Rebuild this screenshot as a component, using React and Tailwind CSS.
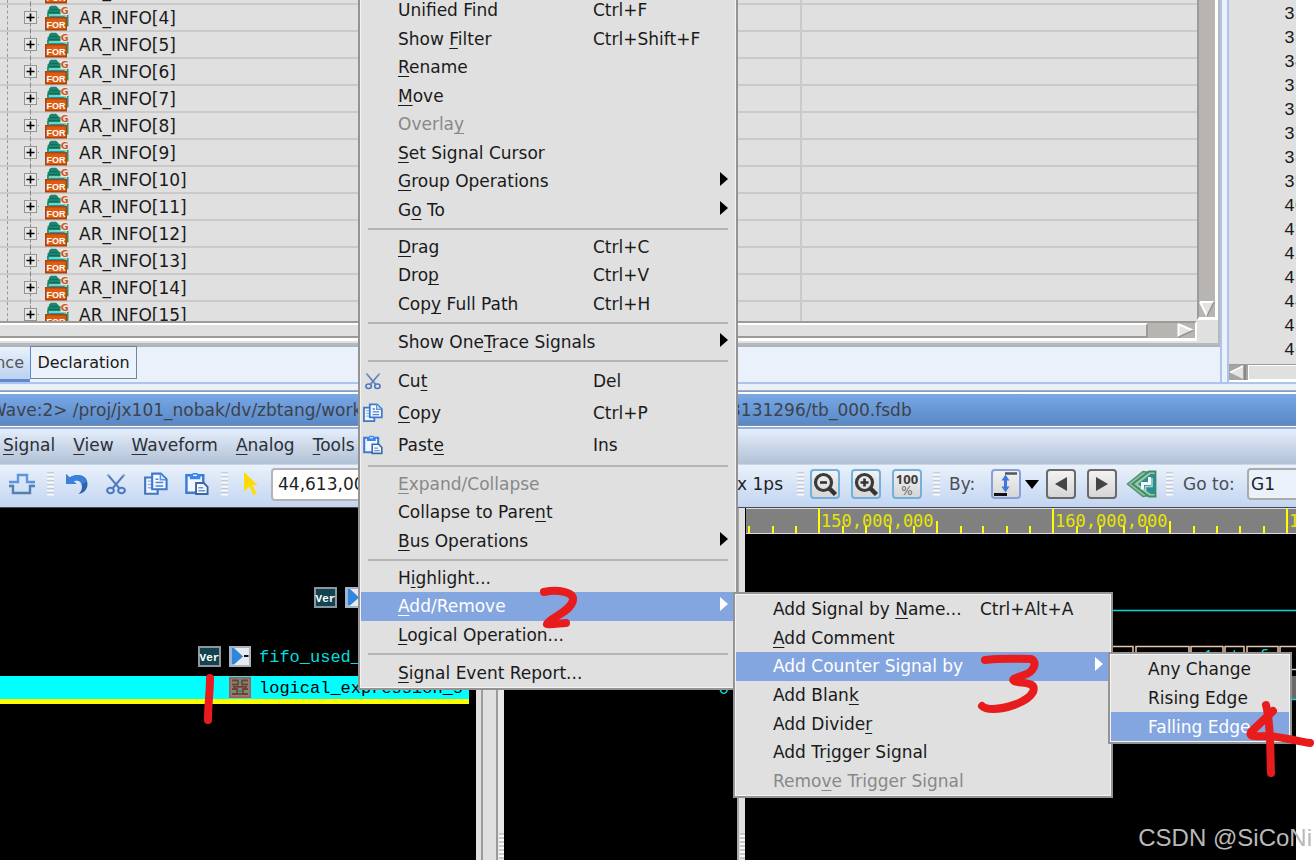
import React from "react";

const SANS = "font-['DejaVu_Sans',sans-serif] text-[17px] leading-5";
const MONO = "font-['Liberation_Mono',monospace] text-[17px] leading-5";

/* Text with a mnemonic: the character after "&" is underlined. */
function Mnemonic({ text }) {
  const i = text.indexOf("&");
  if (i < 0) return <span>{text}</span>;
  return (
    <span>
      {text.slice(0, i)}
      <u className="underline decoration-1 underline-offset-[3px] [text-decoration-skip-ink:none]">{text[i + 1]}</u>
      {text.slice(i + 2)}
    </span>
  );
}

function ForIcon() {
  return (
    <svg className="h-[26px] w-6 shrink-0" viewBox="0 0 24 26" aria-hidden="true">
      <path d="M2 8h19v14l-3 3H2z" fill="#2b9483" />
      <path d="M4 9h17v2.500H4z" fill="#6fd6c4" />
      <path d="M5 11h14v2H5z" fill="#1795b0" />
      <path d="M2.500 9V5.500L4 4V2.500L6 .8h5L13 2.500 14 4h3v5z" fill="#1a8571" />
      <path d="M5 4.500h8M3.500 7.500h11" stroke="#126a5b" strokeWidth="1" />
      <path d="M20.500 10.500l2.500-.5v10l-2.500 3z" fill="#8fe0d0" />
      <path d="M22.800 9.500v12" stroke="#1f8576" strokeWidth="1.300" />
      <path d="M15.500 1h8v9h-8z" fill="#ece4de" />
      <text x="15.700" y="9.300" fontSize="9.500" fontWeight="700" fontFamily="DejaVu Sans, sans-serif" fill="#c9581c">G</text>
      <path d="M.7 12.700h20.600v12H.7z" fill="#dd5c10" stroke="#a8450f" strokeWidth="1.400" />
      <text x="1.600" y="22.600" fontSize="9" fontWeight="700" fontFamily="Liberation Sans, sans-serif" fill="#fff">FOR</text>
    </svg>
  );
}

function ScissorsIcon({ className }) {
  return (
    <svg className={className} viewBox="0 0 20 22" fill="none" aria-hidden="true">
      <path d="M1.500 1.500L14 16M18.500 1.500L6 16" stroke="#8ba4cc" strokeWidth="2.400" />
      <path d="M3 3l10 12M17 3L7 15" stroke="#4a72b5" strokeWidth="1.200" />
      <ellipse cx="4.500" cy="17.500" rx="3.400" ry="2.800" stroke="#4c78bf" strokeWidth="2" />
      <ellipse cx="15.500" cy="17.500" rx="3.400" ry="2.800" stroke="#4c78bf" strokeWidth="2" />
    </svg>
  );
}

function CopyIcon({ className }) {
  return (
    <svg className={className} viewBox="0 0 25 24" fill="none" aria-hidden="true">
      <path d="M1.200 5.200h13v17h-13z" fill="#f2f7ff" stroke="#4276bd" strokeWidth="2.200" />
      <path d="M4 9h5M4 12.500h5M4 16h5" stroke="#8fb2e4" strokeWidth="1.500" />
      <path d="M8.500 1.200h9l6 5.800v10.500h-15z" fill="#f5f9ff" stroke="#3c79cf" strokeWidth="2.200" />
      <path d="M17 1.500v6h6" fill="#cfe0fa" stroke="#5b93df" strokeWidth="1.500" />
      <path d="M12 7h3M12 10.500h8M12 14h8" stroke="#4c83d0" strokeWidth="1.600" />
    </svg>
  );
}

function PasteIcon({ className }) {
  return (
    <svg className={className} viewBox="0 0 25 25" fill="none" aria-hidden="true">
      <path d="M1.500 3.500h17.500v18H1.500z" fill="#f2f7ff" stroke="#3c7cdb" strokeWidth="2.600" />
      <path d="M5 2.500h2.500L8 1h5l.5 1.500H16v5H5z" fill="#3c86ea" />
      <path d="M8.500 3.500h4" stroke="#e9f2ff" strokeWidth="1.500" />
      <path d="M11.500 11.500h8l4 4V23h-12z" fill="#f5f9ff" stroke="#3c68a6" strokeWidth="2" />
      <path d="M14 16.500h5M14 19.500h7" stroke="#6c93c8" strokeWidth="1.500" />
    </svg>
  );
}

function ToolButton({ label, children, className = "w-6" }) {
  return (
    <button type="button" aria-label={label} className={"flex h-8 shrink-0 items-center justify-center " + className}>
      {children}
    </button>
  );
}

function Grip() {
  return (
    <svg className="h-6 w-[7px] shrink-0" viewBox="0 0 7 24" aria-hidden="true">
      <path d="M0 1h7M0 5h7M0 9h7M0 13h7M0 17h7M0 21h7" stroke="#a9b0ba" strokeWidth="1" />
      <path d="M0 2.500h7M0 6.500h7M0 10.500h7M0 14.500h7M0 18.500h7M0 22.500h7" stroke="#f7f9fc" strokeWidth="2" />
    </svg>
  );
}

function SplitterGrip() {
  return (
    <svg className="h-[27px] w-[6px]" viewBox="0 0 6 27" aria-hidden="true">
      <path d="M1 1h5M1 5h5M1 9h5M1 13h5M1 17h5M1 21h5M1 25h5" stroke="#bdbdbd" strokeWidth="1.500" />
      <path d="M1 3h5M1 7h5M1 11h5M1 15h5M1 19h5M1 23h5" stroke="#fff" strokeWidth="1.500" />
    </svg>
  );
}

/* ---------- Upper panes ---------- */

function TreeRow({ n }) {
  return (
    <li role="treeitem" className="flex h-[27px] border-b-2 border-[#cacaca]">
      <div className="flex w-[802px] shrink-0 items-center border-r-2 border-[#cacaca]">
        <span className="ml-[7px] h-full border-l border-dashed border-[#9a9a9a]" />
        <span className="ml-[14px] flex h-[27px] w-4 shrink-0 flex-col items-center">
          <span className="h-[7px] border-l border-dashed border-[#888]" />
          <button
            type="button"
            aria-label={"Expand AR_INFO[" + n + "]"}
            className="size-[13px] shrink-0 border border-[#96948f] bg-[#e6e6e6]"
          >
            <svg viewBox="0 0 11 11" className="size-[11px]" aria-hidden="true">
              <path d="M5.500 1.500v8M1.500 5.500h8" stroke="#000" strokeWidth="1.600" />
            </svg>
          </button>
          <span className="h-[7px] border-l border-dashed border-[#888]" />
        </span>
        <span className="mr-[6px] size-px bg-[#888]" />
        <ForIcon />
        <span className={"ml-[10px] text-[#1a1a1a] " + SANS}>AR_INFO[{n}]</span>
      </div>
    </li>
  );
}

function SignalTree() {
  return (
    <ul role="tree" className="h-[321px] flex-1 overflow-hidden bg-[#e0e0e0]">
      <li className="h-[5px] overflow-hidden">
        <ul className="-mt-[22px]">
          <TreeRow n={3} />
        </ul>
      </li>
      {[4, 5, 6, 7, 8, 9, 10, 11, 12, 13, 14, 15].map((n) => (
        <TreeRow key={n} n={n} />
      ))}
    </ul>
  );
}

function TreePane() {
  return (
    <section className="flex min-w-0 flex-1 flex-col bg-[#e0e0e0]">
      <div className="flex flex-col border-r-2 border-[#b9b9b9]">
        <div className="flex">
          <SignalTree />
          <div className="flex h-[320px] w-[21px] flex-col items-stretch border-b-[3px] border-l-2 border-r-[3px] border-b-white border-l-[#9d9b97] border-r-white bg-[#b8b4b1]">
            <button type="button" aria-label="Scroll down" className="mt-auto h-4">
              <svg viewBox="0 0 16 16" className="size-4" aria-hidden="true">
                <path d="M1 1h14L8 15z" fill="#e4e3e1" />
                <path d="M1 1h14M1 1l7 14" stroke="#fff" strokeWidth="2" />
                <path d="M15 1L8 15" stroke="#97948f" strokeWidth="1.500" />
              </svg>
            </button>
          </div>
        </div>
        <div className="mr-[21px] flex h-5 border-b-[3px] border-r-2 border-t-2 border-b-white border-r-white border-t-[#9d9b97] bg-[#b8b4b1]">
          <div className="flex-1 border-b-2 border-r-2 border-t-2 border-b-[#9d9b97] border-r-[#9d9b97] border-t-white bg-[#e0e0e0]" />
          <div className="w-[29px]" />
          <button type="button" aria-label="Scroll right" className="w-[18px]">
            <svg viewBox="0 0 18 15" className="h-[15px] w-[18px]" aria-hidden="true">
              <path d="M1 0.500v14L16 7.500z" fill="#e4e3e1" />
              <path d="M1.500 1v13M1 1l15 6.500" stroke="#fff" strokeWidth="2" />
              <path d="M1 14.500l15-7" stroke="#97948f" strokeWidth="1.500" />
            </svg>
          </button>
        </div>
        <div className="h-1 border-b-2 border-[#b9b9b9]" />
      </div>
      <div className={"flex h-[37px] items-start border-t-2 border-[#a9b5c0] bg-[#eaf1fa] " + SANS}>
        <button
          type="button"
          className="flex h-[35px] w-[30px] items-center justify-end border-b-[3px] border-[#5b8bcb] bg-linear-to-b from-[#e9f1fb] to-[#bcd2f1] pr-[6px] text-[#555]"
        >
          <span className="text-[16px]">Instance</span>
        </button>
        <button
          type="button"
          className="-mt-px flex h-[33px] w-[107px] items-center justify-center border border-[#74829a] border-l-[#5b8bcb] bg-[#ecf2f9] text-[16px] text-[#1a1a1a]"
        >
          Declaration
        </button>
      </div>
    </section>
  );
}

function SourcePane() {
  return (
    <section className="flex w-[67px] flex-col overflow-hidden bg-[#e0e0e0]">
      <ol className="flex-1 overflow-hidden pl-[55px] pt-[2px] font-['Liberation_Mono',monospace] text-[18px] leading-5 text-[#1a1a1a]">
        {[32, 33, 34, 35, 36, 37, 38, 39, 40, 41, 42, 43, 44, 45, 46].map((n) => (
          <li key={n} className="flex h-6 items-center">{n}</li>
        ))}
      </ol>
      <div className="flex h-[18px] border-b-2 border-t border-b-white border-t-[#9d9b97] bg-[#a5a5a5]">
        <button type="button" aria-label="Scroll left" className="w-[17px] shrink-0 border-r-2 border-[#888]">
          <svg viewBox="0 0 15 15" className="size-[15px]" aria-hidden="true">
            <path d="M14 1v13L1 7.500z" fill="#e4e3e1" />
            <path d="M14 1L1 7.500" stroke="#fff" strokeWidth="1.500" />
          </svg>
        </button>
        <div className="ml-[2px] flex-1 border border-r-0 border-white bg-[#e0e0e0]" />
      </div>
    </section>
  );
}

/* ---------- Title, menu bar, tool bar ---------- */

function TitleBar() {
  return (
    <header
      className={
        "flex h-[31px] items-center overflow-hidden whitespace-nowrap bg-linear-to-b from-[#7aa8e6] to-[#5888c6] text-[#3c434c] " + SANS
      }
    >
      <h1 className="-ml-[10px] flex">
        <span className="w-[740px] shrink-0">Wave:2&gt; /proj/jx101_nobak/dv/zbtang/work</span>
        <span>3131296/tb_000.fsdb</span>
      </h1>
    </header>
  );
}

function MenuBar() {
  return (
    <nav
      className={
        "flex h-9 items-center gap-[18px] border-b border-[#c9d6ea] bg-linear-to-b from-[#e5eefb] to-[#b2c1d6] pb-1 pl-[3px] text-[#2b2f36] " + SANS
      }
    >
      {["&Signal", "&View", "&Waveform", "&Analog", "&Tools"].map((t) => (
        <button key={t} type="button">
          <Mnemonic text={t} />
        </button>
      ))}
    </nav>
  );
}

const FRAMED = "w-[30px] h-[30px] rounded border-2 bg-linear-to-b from-[#f2f2f2] to-[#d6d6d6]";

function ToolBar() {
  return (
    <div
      className={
        "flex h-[42px] items-center overflow-hidden bg-linear-to-b from-[#e9f1fa] to-[#c3d5f2] pb-1 text-[#1f1f1f] " + SANS
      }
    >
      <div className="flex w-[783px] shrink-0 items-center">
        <ToolButton label="Signal list" className="ml-2 w-7">
          <svg viewBox="0 0 28 22" className="h-[22px] w-7" fill="none" aria-hidden="true">
            <path d="M1 9h9V2h9v7h8" stroke="#5e94e0" strokeWidth="2.400" />
            <path d="M1 13h4v7h17v-7h5" stroke="#557fae" strokeWidth="2.400" />
            <path d="M2 11h3M22 11h4" stroke="#a7c0e4" strokeWidth="1.500" />
          </svg>
        </ToolButton>
        <span className="ml-[11px] flex"><Grip /></span>
        <ToolButton label="Undo" className="ml-[11px] w-6">
          <svg viewBox="0 0 24 24" className="size-6" fill="none" aria-hidden="true">
            <path d="M1 2v10h10.500L8.500 9C13 7 17 10 17 15c0 3-1.500 5-3.500 7 6-1 9-5 9-10C22.500 3 12 .5 4.500 5.500z" fill="#2c63ad" />
            <path d="M1 2v10h10.500L8.500 9C12 7.500 16 9 17 12l5-2C19 2.500 11 1 4.500 5.500z" fill="#3b80da" />
          </svg>
        </ToolButton>
        <ToolButton label="Cut" className="ml-[17px] w-5"><ScissorsIcon className="h-[22px] w-5" /></ToolButton>
        <ToolButton label="Copy" className="ml-[18px] w-6"><CopyIcon className="h-6 w-6" /></ToolButton>
        <ToolButton label="Paste" className="ml-[17px] w-6"><PasteIcon className="h-6 w-6" /></ToolButton>
        <span className="ml-3 flex"><Grip /></span>
        <ToolButton label="Select" className="ml-[15px] w-4">
          <svg viewBox="0 0 16 26" className="h-[26px] w-4" aria-hidden="true">
            <path d="M1 1l13.500 13h-5l4 8.500-3 2L6.500 15.500 1 20.500z" fill="#ffdc00" />
          </svg>
        </ToolButton>
        <input
          type="text"
          aria-label="Cursor time"
          defaultValue="44,613,000"
          className="ml-3 h-[33px] min-w-0 flex-1 rounded border-2 border-[#b4b4b4] bg-white px-[5px]"
        />
        <span className="ml-8">x 1ps</span>
      </div>
      <span className="ml-[14px] flex"><Grip /></span>
      <ToolButton label="Zoom out" className={"ml-[6px] border-[#73b0dd] " + FRAMED}>
        <svg viewBox="0 0 26 26" className="size-[26px]" fill="none" aria-hidden="true">
          <circle cx="11.500" cy="11.500" r="8" stroke="#3a3a3a" strokeWidth="3.200" />
          <path d="M8 11.500h7" stroke="#333" strokeWidth="2.600" />
          <path d="M17.500 17.500l6 6" stroke="#333" strokeWidth="4.500" />
        </svg>
      </ToolButton>
      <ToolButton label="Zoom in" className={"ml-[11px] border-[#73b0dd] " + FRAMED}>
        <svg viewBox="0 0 26 26" className="size-[26px]" fill="none" aria-hidden="true">
          <circle cx="11.500" cy="11.500" r="8" stroke="#3a3a3a" strokeWidth="3.200" />
          <path d="M7.500 11.500h8M11.500 7.500v8" stroke="#333" strokeWidth="2.600" />
          <path d="M17.500 17.500l6 6" stroke="#333" strokeWidth="4.500" />
        </svg>
      </ToolButton>
      <ToolButton label="Zoom 100%" className={"ml-[11px] border-[#73b0dd] " + FRAMED}>
        <svg viewBox="0 0 26 26" className="size-[26px]" aria-hidden="true">
          <text x="13" y="12.500" textAnchor="middle" fontSize="13" fontWeight="700" fontFamily="Open Sans, sans-serif" fill="#3d3d3d">100</text>
          <text x="13" y="24" textAnchor="middle" fontSize="12" fontFamily="DejaVu Sans, sans-serif" fill="#666">%</text>
        </svg>
      </ToolButton>
      <span className="ml-[11px] flex"><Grip /></span>
      <span className="ml-[9px] w-[42px] shrink-0 text-[#4a4f57]">By:</span>
      <ToolButton label="Search by edge" className={"border-[#86a0dc] " + FRAMED}>
        <svg viewBox="0 0 26 26" className="size-[26px]" fill="none" aria-hidden="true">
          <path d="M12 2.500h12" stroke="#555" strokeWidth="2.500" />
          <path d="M1 23.500h13" stroke="#111" strokeWidth="3" />
          <path d="M12.500 8v9" stroke="#3c78e0" strokeWidth="3" />
          <path d="M8.500 9.500l4-6 4 6zM8.500 15.500l4 6 4-6z" fill="#3c78e0" />
        </svg>
      </ToolButton>
      <ToolButton label="Search by options" className="ml-[4px] w-[14px]">
        <svg viewBox="0 0 14 9" className="h-[9px] w-[14px]" aria-hidden="true">
          <path d="M0 0h14L7 9z" fill="#000" />
        </svg>
      </ToolButton>
      <ToolButton label="Previous" className={"ml-[7px] border-[#6a6a6a] " + FRAMED}>
        <svg viewBox="0 0 12 14" className="h-[14px] w-3" aria-hidden="true"><path d="M0 7L12 0v14z" fill="#444" /></svg>
      </ToolButton>
      <ToolButton label="Next" className={"ml-[11px] border-[#6a6a6a] " + FRAMED}>
        <svg viewBox="0 0 12 14" className="h-[14px] w-3" aria-hidden="true"><path d="M12 7L0 0v14z" fill="#444" /></svg>
      </ToolButton>
      <ToolButton label="Trace" className="ml-[9px] w-[31px]">
        <svg viewBox="0 0 31 28" className="h-7 w-[31px]" fill="none" aria-hidden="true">
          <path d="M17 1.500L1.500 14 17 26.500l6-1V2.500z" fill="#93bfa0" stroke="#4d9070" strokeWidth="1.500" />
          <path d="M23 1.500L6.500 14 23 26.500h6.500v-25z" fill="#9cc6a8" stroke="#3f8a66" strokeWidth="1.800" />
          <path d="M24.500 4L12 14l12.500 10H29V4z" fill="#2b8f92" />
          <path d="M16.500 19.500v-6h7V7" stroke="#f4fbf8" strokeWidth="3" />
          <path d="M19.500 21v-4.500h6.500V8" stroke="#a8dad6" strokeWidth="1.500" />
        </svg>
      </ToolButton>
      <span className="ml-[9px] flex"><Grip /></span>
      <label htmlFor="goto" className="ml-[10px] w-[64px] shrink-0 text-[#4a4f57]">Go to:</label>
      <select
        id="goto"
        defaultValue="G1"
        className="h-8 w-[120px] shrink-0 appearance-none rounded border-2 border-[#ababab] bg-[#eaf1fa] pl-[2px]"
      >
        <option>G1</option>
      </select>
    </div>
  );
}

/* ---------- Waveform area ---------- */

function VerIcon() {
  return (
    <svg viewBox="0 0 23 21" className="h-[21px] w-[23px] shrink-0" aria-hidden="true">
      <path d="M1 1h21v19H1z" fill="#114450" stroke="#8d979b" strokeWidth="2" />
      <text x="11.500" y="15" textAnchor="middle" fontSize="11" fontWeight="700" fontFamily="Liberation Mono, monospace" fill="#fff">Ver</text>
    </svg>
  );
}

function InputIcon() {
  return (
    <svg viewBox="0 0 22 21" className="h-[21px] w-[22px] shrink-0" aria-hidden="true">
      <path d="M1 1h20v19H1z" fill="#e8eaee" stroke="#aab2bf" strokeWidth="2" />
      <path d="M2.500 2h2.500l9 8.500-9 8H2.500z" fill="#2f86dc" />
      <path d="M15 10h4.500" stroke="#111" strokeWidth="2" />
    </svg>
  );
}

function LogicIcon() {
  return (
    <svg viewBox="0 0 22 21" className="h-[21px] w-[22px] shrink-0" fill="none" aria-hidden="true">
      <path d="M.8.800h20.400v19.400H.8z" fill="#7c8882" stroke="#b5534c" strokeWidth="1.500" />
      <path d="M3 3.500h6v4H3M19 3.500h-6v4h6M3 12h5v5H3M19 12h-5v5h5M4 9.800h14M8 16.800h6" stroke="#74402f" strokeWidth="1.800" />
      <path d="M9 5.500h4M8 13.800h6" stroke="#2f7a80" strokeWidth="1.200" />
    </svg>
  );
}

function NamePane() {
  return (
    <section className={"w-[476px] shrink-0 pt-[74px] text-[#00dede] " + MONO}>
      <div className="flex h-[30px] w-[469px] items-center gap-2 pl-[314px]">
        <VerIcon />
        <InputIcon />
      </div>
      <div className="mt-[29px] flex h-[30px] w-[469px] items-center gap-2 overflow-hidden pl-[198px]">
        <VerIcon />
        <InputIcon />
        <span className="pt-1">fifo_used_</span>
      </div>
      <div className="mt-[5px] flex h-[28px] w-[469px] items-center gap-2 overflow-hidden border-b-[5px] border-[#ffff00] bg-[#00ffff] pl-[229px] text-black">
        <LogicIcon />
        <span className="pt-[2px]">logical_expression_s</span>
      </div>
    </section>
  );
}

function Ruler() {
  const minor = [2, 26, 49, 96, 119, 143, 167, 214, 236, 260, 283, 330, 353, 377, 400, 447, 470, 493, 517];
  return (
    <div className="relative h-[26px] border-b border-t border-[#dcdcdc] bg-[#808080]">
      <div className="flex h-6 items-center whitespace-nowrap pl-[75px] font-['DejaVu_Sans_Mono',monospace] text-[17px] leading-6 text-[#e6e600]">
        <span className="w-[234px] shrink-0">150,000,000</span>
        <span className="w-[234px] shrink-0">160,000,000</span>
        <span className="w-[234px] shrink-0">170,000,000</span>
      </div>
      <svg className="absolute inset-x-0 top-0 h-6 w-full" aria-hidden="true">
        {minor.map((x) => (
          <rect key={x} x={x} y="17" width="2" height="7" fill="#ffff00" />
        ))}
        {[190, 423].map((x) => (
          <rect key={x} x={x} y="12" width="2" height="12" fill="#ffff00" />
        ))}
        {[72, 306, 540].map((x) => (
          <rect key={x} x={x} y="0" width="2" height="24" fill="#ffff00" />
        ))}
      </svg>
    </div>
  );
}

function WavePane() {
  const busCells = [
    { x: 301, w: 86, t: "" },
    { x: 390, w: 53, t: "" },
    { x: 445, w: 32, t: "1" },
    { x: 479, w: 19, t: "t" },
    { x: 501, w: 31, t: "f" },
    { x: 534, w: 40, t: "t" },
  ];
  return (
    <section className="min-w-0 flex-1 overflow-hidden pl-px">
      <Ruler />
      <svg className="h-[200px] w-full" aria-hidden="true">
        <path d="M0 76.500h2000" stroke="#00dcdc" strokeWidth="1.500" />
        {busCells.map((c) => (
          <g key={c.x}>
            <rect x={c.x} y="112.500" width={c.w} height="23" fill="none" stroke="#e8c8a8" strokeWidth="1.500" />
            <text x={c.x + c.w / 2 - 4} y="127" fontSize="17" fontFamily="Liberation Mono, monospace" fill="#00dede">{c.t}</text>
          </g>
        ))}
        <rect x="0" y="142" width="100%" height="23" fill="#6a6a6a" />
        <path d="M0 165.500h2000" stroke="#00dcdc" strokeWidth="1.500" />
      </svg>
    </section>
  );
}

function WaveArea() {
  return (
    <main className="flex flex-1 border-t border-[#4a4a4a] bg-black">
      <NamePane />
      <div className="flex w-7 shrink-0 bg-[#e0e0e0]">
        <div className="box-content w-[5px] border-r-2 border-[#9d9b97]" />
        <div className="box-content w-[13px] border-r-2 border-[#9d9b97]" />
        <div className="flex flex-1 items-end bg-[#e8e8e8]"><SplitterGrip /></div>
      </div>
      <section className={"flex w-[233px] shrink-0 justify-end pr-2 pt-[172px] text-[#00dede] " + MONO}>
        <span>0</span>
      </section>
      <div className="flex w-2 shrink-0 items-end border-l-2 border-[#a9a9a9] bg-[#e0e0e0]"><SplitterGrip /></div>
      <WavePane />
    </main>
  );
}

/* ---------- Popup menus ---------- */

const POPUP = "absolute border-2 border-[#949494] bg-[#e0e0e0] ring-1 ring-inset ring-[#f4f4f4] p-px " + SANS;

function MenuItem({ text, keys, sub, active, disabled, icon, keyCol = "w-[195px]" }) {
  const tone = active ? "bg-[#84a6e0] text-white" : disabled ? "text-[#888]" : "text-[#1a1a1a]";
  return (
    <button
      type="button"
      role="menuitem"
      disabled={disabled}
      className={"relative flex w-full items-center whitespace-nowrap pl-[37px] text-left " + tone}
    >
      {icon && <span className="absolute left-[2px] flex w-5 justify-center">{icon}</span>}
      <span className={"shrink-0 " + keyCol}>
        <Mnemonic text={text} />
      </span>
      {keys && <span>{keys}</span>}
      {sub && (
        <svg viewBox="0 0 8 14" className="mb-1 ml-auto mr-[7px] h-[14px] w-2" aria-hidden="true">
          <path d="M0 0l8 7-8 7z" fill={active ? "#fff" : "#000"} />
        </svg>
      )}
    </button>
  );
}

function Divider() {
  return (
    <div role="separator" className="mx-[7px] flex h-[9px] items-center">
      <span className="h-[2px] w-full bg-[#b4b4b4]" />
    </div>
  );
}

const GROUP = "grid auto-rows-fr ";

function ContextMenu() {
  return (
    <div role="menu" aria-label="Signal" className={POPUP + " -top-[7px] left-[358px] w-[380px]"}>
      <div className={GROUP + "h-[228px]"}>
        <MenuItem text="Unified Find" keys="Ctrl+F" />
        <MenuItem text="Show &Filter" keys="Ctrl+Shift+F" />
        <MenuItem text="&Rename" />
        <MenuItem text="&Move" />
        <MenuItem text="Overla&y" disabled />
        <MenuItem text="&Set Signal Cursor" />
        <MenuItem text="&Group Operations" sub />
        <MenuItem text="G&o To" sub />
      </div>
      <Divider />
      <div className={GROUP + "h-[85px]"}>
        <MenuItem text="&Drag" keys="Ctrl+C" />
        <MenuItem text="Dro&p" keys="Ctrl+V" />
        <MenuItem text="Cop&y Full Path" keys="Ctrl+H" />
      </div>
      <Divider />
      <div className={GROUP + "h-[29px]"}>
        <MenuItem text="Show One&Trace Signals" sub />
      </div>
      <Divider />
      <div className={GROUP + "h-[96px]"}>
        <MenuItem text="Cu&t" keys="Del" icon={<ScissorsIcon className="h-[18px] w-4" />} />
        <MenuItem text="&Copy" keys="Ctrl+P" icon={<CopyIcon className="size-5" />} />
        <MenuItem text="Past&e" keys="Ins" icon={<PasteIcon className="size-5" />} />
      </div>
      <Divider />
      <div className={GROUP + "h-[85px]"}>
        <MenuItem text="&Expand/Collapse" disabled />
        <MenuItem text="Collapse to Pare&nt" />
        <MenuItem text="&Bus Operations" sub />
      </div>
      <Divider />
      <div className={GROUP + "h-[85px]"}>
        <MenuItem text="H&ighlight..." />
        <MenuItem text="&Add/Remove" sub active />
        <MenuItem text="&Logical Operation..." />
      </div>
      <Divider />
      <div className={GROUP + "h-[29px]"}>
        <MenuItem text="&Signal Event Report..." />
      </div>
    </div>
  );
}

function AddRemoveMenu() {
  return (
    <div role="menu" aria-label="Add/Remove" className={POPUP + " left-[733px] top-[592px] w-[380px]"}>
      <div className={GROUP + "h-[200px]"}>
        <MenuItem text="Add Signal by &Name..." keys="Ctrl+Alt+A" keyCol="w-[207px]" />
        <MenuItem text="&Add Comment" />
        <MenuItem text="Add Counter Signal by" sub active />
        <MenuItem text="Add Blan&k" />
        <MenuItem text="Add Divide&r" />
        <MenuItem text="Add Tr&igger Signal" />
        <MenuItem text="Remo&ve Trigger Signal" disabled />
      </div>
    </div>
  );
}

function EdgeMenu() {
  return (
    <div role="menu" aria-label="Counter edge" className={POPUP + " left-[1108px] top-[652px] w-[184px]"}>
      <div className={GROUP + "h-[86px]"}>
        <MenuItem text="Any Change" keyCol="w-auto" />
        <MenuItem text="Rising Edge" keyCol="w-auto" />
        <MenuItem text="Falling Edge" keyCol="w-auto" active />
      </div>
    </div>
  );
}

/* Hand-drawn step numbers over the menus. */
function Annotations() {
  return (
    <svg
      className="pointer-events-none absolute left-0 top-0 h-[860px] w-[1314px]"
      viewBox="0 0 1314 860"
      fill="none"
      stroke="#e81c1c"
      strokeWidth="8"
      strokeLinecap="round"
      strokeLinejoin="round"
      aria-hidden="true"
    >
      <path d="M210 678C210 692 208 704 208 720" />
      <path d="M544 592C558 589 574 592 573 600C571 612 549 618 547 624C553 625 560 623 566 623" />
      <path d="M985 660C1000 658 1014 659 1031 659C1038 662 1034 672 1024 675C1016 678 1011 679 1014 681C1022 684 1037 681 1033 692C1027 703 1004 709 993 709C988 709 984 708 982 706" />
      <path d="M1273 711L1251 732C1248 738 1258 736 1268 736C1284 737 1296 741 1310 743" />
      <path d="M1266 705C1271 724 1270 750 1271 773" />
    </svg>
  );
}

export default function App() {
  return (
    <div className="relative flex min-h-screen overflow-hidden bg-white">
      <div className="mr-[18px] flex min-w-0 flex-1 flex-col">
        <div className="flex border-b-2 border-[#adc4ec]">
          <TreePane />
          <div className="w-[9px] border-x-2 border-[#adc4ec] bg-[#eaf1fa]" />
          <SourcePane />
        </div>
        <div className="h-[7px] border-b border-[#8fb0e6] bg-[#eaf1fa]" />
        <div className="h-[3px] border-t border-[#9a9a9a] bg-white" />
        <TitleBar />
        <div className="h-1 border-b-2 border-t border-b-[#8fb0e6] border-t-[#8c8c8c] bg-white" />
        <MenuBar />
        <ToolBar />
        <WaveArea />
      </div>
      <ContextMenu />
      <AddRemoveMenu />
      <EdgeMenu />
      <Annotations />
      <p className="absolute bottom-2 right-[2px] font-['Liberation_Sans',sans-serif] text-[24px] leading-7 text-[#b9b9b9]">
        CSDN @SiCoNi
      </p>
    </div>
  );
}
